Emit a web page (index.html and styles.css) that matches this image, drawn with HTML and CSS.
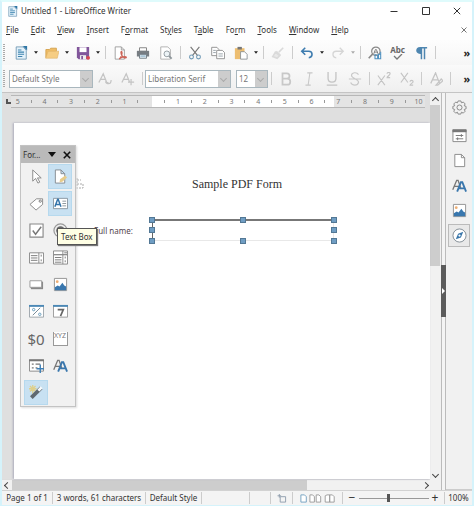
FILE: index.html
```html
<!DOCTYPE html>
<html lang="en">
<head>
<meta charset="utf-8">
<title>Untitled 1 - LibreOffice Writer</title>
<link rel="stylesheet" href="styles.css">
</head>
<body>
<svg class="defs" aria-hidden="true">
  <symbol id="doc" viewBox="0 0 16 16"><path d="M3 1.5h7l3.500 3.500v9.500H3z" fill="#fff" stroke="#8a8a8a"/><path d="M10 1.500v3.500h3.500" fill="none" stroke="#8a8a8a"/></symbol>
  <symbol id="writer" viewBox="0 0 16 16"><path d="M2.500 1h8l3.500 4v10H2.500z" fill="#e3f1fa" stroke="#7199b4"/><path d="M10 0h5v5z" fill="#2f76a5"/><path d="M4.500 4.500h4M4.500 7h7M4.500 9.500h7M4.500 12h5" stroke="#3d83ae" stroke-width="1.200"/></symbol>
  <symbol id="aa" viewBox="0 0 16 16"><path d="M.8 12.500L5 2.500h1.500l3 9M2.500 9h5" fill="none" stroke="#777" stroke-width="1.400"/><path d="M5.500 14.500l4-10h1.500l4 10M7 11h6.500" fill="none" stroke="#3a77ad" stroke-width="2"/></symbol>
  <symbol id="image" viewBox="0 0 16 16"><path d="M1.500 1.500h13v13h-13z" fill="#fff" stroke="#929292"/><circle cx="4.500" cy="5" r="1.500" fill="#eeae73"/><path d="M2 14v-3l3-2 2 1 3-4 2 3 2 1v4z" fill="#3977ae"/></symbol>
  <symbol id="down" viewBox="0 0 8 5"><path d="M0 0h8L4 5z" fill="currentColor"/></symbol>
</svg>
<div class="window">
  <header class="titlebar">
    <svg class="app-icon"><use href="#writer"/></svg>
    <h1>Untitled 1 - LibreOffice Writer</h1>
    <button class="win-btn" aria-label="Minimize"><svg viewBox="0 0 8 8"><path d="M.5 4.500h7" stroke="#333"/></svg></button>
    <button class="win-btn" aria-label="Maximize"><svg viewBox="0 0 8 8"><path d="M.5 .5h7v7h-7z" fill="none" stroke="#333"/></svg></button>
    <button class="win-btn" aria-label="Close"><svg viewBox="0 0 8 8"><path d="M.8 .8l6.400 6.400M7.200 .8L.8 7.200" stroke="#333"/></svg></button>
  </header>
  <nav class="menubar">
    <a href="#"><u>F</u>ile</a><a href="#"><u>E</u>dit</a><a href="#"><u>V</u>iew</a><a href="#"><u>I</u>nsert</a><a href="#">F<u>o</u>rmat</a><a href="#">St<u>y</u>les</a><a href="#">T<u>a</u>ble</a><a href="#">Fo<u>r</u>m</a><a href="#"><u>T</u>ools</a><a href="#"><u>W</u>indow</a><a href="#"><u>H</u>elp</a>
    <button class="doc-close" aria-label="Close document"><svg viewBox="0 0 8 8"><path d="M1.500 1.500l5 5M6.500 1.500l-5 5" stroke="#777"/></svg></button>
  </nav>
  <div class="toolbar standard">
    <i class="grip"></i>
    <button aria-label="New"><svg><use href="#writer"/></svg></button>
    <button class="drop" aria-label="New options"><svg><use href="#down"/></svg></button>
    <button aria-label="Open"><svg viewBox="0 0 16 16"><path d="M1 13.500V4h4l1.500-1.500H13V6" fill="#efbd67" stroke="#d3a04a"/><path d="M3.500 6H16l-2 8H.8z" fill="#f6cd83" stroke="#dcae61" stroke-width=".6"/></svg></button>
    <button class="drop" aria-label="Open options"><svg><use href="#down"/></svg></button>
    <button aria-label="Save"><svg viewBox="0 0 16 16"><path d="M1 1h14v14H3l-2-2z" fill="#81569b"/><path d="M4 1.500h8V7H4z" fill="#fff"/><path d="M4.500 10.500h7V15h-7z" fill="#eee"/><path d="M6 11.500h2V15H6z" fill="#81569b"/><circle cx="13.800" cy="13.500" r="2.200" fill="#dc4850"/></svg></button>
    <button class="drop" aria-label="Save options"><svg><use href="#down"/></svg></button>
    <i class="sep"></i>
    <button aria-label="Export as PDF"><svg viewBox="0 0 16 16"><path d="M2.500 1h7l3.500 3.500V15H2.500zM9.500 1v3.500H13" fill="#fff" stroke="#999"/><path d="M7 15c3-3 4-7 3-8.500S8 9 11 12s5 1.500 4 .5-5 0-8 2.500z" fill="none" stroke="#cb6357" stroke-width="1.300"/></svg></button>
    <button aria-label="Print"><svg viewBox="0 0 16 16"><path d="M4 2h8v4H4z" fill="#fff" stroke="#777"/><path d="M1 5.500h14V12H1z" fill="#777d82"/><path d="M4 9.500h8V14H4z" fill="#e9f1f6" stroke="#6c7880"/><path d="M5 11.500h6" stroke="#6c9cba"/></svg></button>
    <button aria-label="Print preview"><svg viewBox="0 0 16 16"><path d="M2 1h8l3 3v11H2z" fill="#fff" stroke="#aaa"/><circle cx="9" cy="9" r="3.300" fill="#edf4f7" stroke="#8d969b"/><path d="M11.500 11.500l3 3" stroke="#8d969b" stroke-width="2"/></svg></button>
    <i class="sep"></i>
    <button aria-label="Cut"><svg viewBox="0 0 16 16"><path d="M3 1l8 10M13 1L5 11" stroke="#777" stroke-width="1.300"/><circle cx="4" cy="12.500" r="2.200" fill="none" stroke="#709ab6" stroke-width="1.200"/><circle cx="12" cy="12.500" r="2.200" fill="none" stroke="#709ab6" stroke-width="1.200"/></svg></button>
    <button aria-label="Copy"><svg viewBox="0 0 16 16"><path d="M.8 1.500h6L9 4v7H.8z" fill="#fff" stroke="#8a8a8a"/><path d="M6.500 5H13l2.500 2.500v7h-9z" fill="#fff" stroke="#8a8a8a"/><path d="M2.500 5h3M2.500 7.500h3M8.500 9h5M8.500 11.500h5" stroke="#8f9aa2"/></svg></button>
    <button aria-label="Paste"><svg viewBox="0 0 16 16"><path d="M1 2.500h11V15H1z" fill="#edbe71"/><path d="M4 1h5v3H4z" fill="#777"/><path d="M7.500 6.500H12l3 3V15H7.500z" fill="#fff" stroke="#899096"/></svg></button>
    <button class="drop" aria-label="Paste options"><svg><use href="#down"/></svg></button>
    <i class="sep"></i>
    <button disabled aria-label="Clone formatting"><svg viewBox="0 0 16 16"><path d="M14 2L9 7M6 6l5 5M5 7l-3 5 5 2 3-3z" stroke="#dadada" stroke-width="1.800" fill="#e8e8e8"/></svg></button>
    <i class="sep"></i>
    <button aria-label="Undo"><svg viewBox="0 0 16 16"><path d="M6 2L2 6l4 4M2 6h8c5 0 5 7 0 7.500" fill="none" stroke="#3e7caf" stroke-width="1.800"/></svg></button>
    <button class="drop" aria-label="Undo options"><svg><use href="#down"/></svg></button>
    <button disabled aria-label="Redo"><svg viewBox="0 0 16 16"><path d="M10 2l4 4-4 4M14 6H6c-5 0-5 7 0 7.500" fill="none" stroke="#d5d5d5" stroke-width="1.500"/></svg></button>
    <button class="drop faded" aria-label="Redo options"><svg><use href="#down"/></svg></button>
    <i class="sep"></i>
    <button aria-label="Find and replace"><svg viewBox="0 0 16 16"><circle cx="9" cy="6" r="4.800" fill="none" stroke="#888" stroke-width="1.400"/><path d="M5.500 9L.8 14" stroke="#888" stroke-width="1.800"/><path d="M6.500 9l2-5h1l2 5M7 7h4" fill="none" stroke="#777"/><path d="M10 10h-2v4.500h3V10M14.500 6.500v8h-2.500v-5h2.500" fill="none" stroke="#4c90c0" stroke-width="1.200"/></svg></button>
    <button class="spell" aria-label="Spelling"><b>Abc</b><svg viewBox="0 0 10 6"><path d="M1 2l3 3 5-5" fill="none" stroke="#777" stroke-width="1.300"/></svg></button>
    <button aria-label="Formatting marks"><svg viewBox="0 0 16 16"><path d="M7 2h8M8.500 2v13M12 2v13" stroke="#4e86b0" stroke-width="1.700"/><path d="M8.500 1.200H7C1 1.200 1 9 7 9h1.500z" fill="#4e86b0"/></svg></button>
    <i class="sep"></i>
    <button class="more" aria-label="More tools">»</button>
  </div>
  <div class="toolbar formatting">
    <i class="grip"></i>
    <span class="combo style"><select disabled aria-label="Paragraph style"><option>Default Style</option></select></span>
    <button disabled aria-label="Update style"><svg viewBox="0 0 16 16"><path d="M1 12L6 2l4 10M3 8.500h6M15 9c0 6-6 5-6 2M9 9v3h3" fill="none" stroke="#c4c4c4" stroke-width="1.400"/></svg></button>
    <button disabled aria-label="New style"><svg viewBox="0 0 16 16"><path d="M1 12L6 2l4 10M3 8.500h6M11.500 8v7M8 11.500h7" fill="none" stroke="#c4c4c4" stroke-width="1.400"/></svg></button>
    <i class="sep"></i>
    <span class="combo font"><select disabled aria-label="Font name"><option>Liberation Serif</option></select></span>
    <span class="combo size"><select disabled aria-label="Font size"><option>12</option></select></span>
    <i class="sep"></i>
    <button disabled aria-label="Bold"><svg viewBox="0 0 16 16"><path d="M4 1.500h5c4 0 4 6 0 6H4zM4 7.500h5.500c4.500 0 4.500 7 0 7H4z" fill="none" stroke="#c8c8c8" stroke-width="2"/></svg></button>
    <button disabled aria-label="Italic"><svg viewBox="0 0 16 16"><path d="M6 1h6M4 15h6M9 1L7 15" stroke="#c8c8c8" stroke-width="1.200"/></svg></button>
    <button disabled aria-label="Underline"><svg viewBox="0 0 16 16"><path d="M3.500 0v7c0 6 9 6 9 0V0M2 15h12" fill="none" stroke="#c4c4c4" stroke-width="1.500"/></svg></button>
    <button disabled aria-label="Strikethrough"><svg viewBox="0 0 16 16"><path d="M12 3C10-.5 4 .5 4 4s9 4 8 8-7 4-9 0M1 8h14" fill="none" stroke="#c8c8c8" stroke-width="1.300"/></svg></button>
    <i class="sep"></i>
    <button disabled aria-label="Superscript"><svg viewBox="0 0 16 16"><path d="M1 4l8 11M9 4L1 15M11.500 2c0-2 3.500-2 3.500 0 0 1.500-3.500 3-3.500 4.500H15" fill="none" stroke="#c4c4c4" stroke-width="1.300"/></svg></button>
    <button disabled aria-label="Subscript"><svg viewBox="0 0 16 16"><path d="M1 1l8 11M9 1L1 12M11.500 11c0-2 3.500-2 3.500 0 0 1.500-3.500 2.500-3.500 4H15" fill="none" stroke="#c4c4c4" stroke-width="1.300"/></svg></button>
    <i class="sep"></i>
    <button disabled aria-label="Clear formatting"><svg viewBox="0 0 16 16"><path d="M2 13L7.500 1 12 13M4 9h7M8 15l6-7 2 2-6 5z" fill="none" stroke="#c4c4c4" stroke-width="1.400"/></svg></button>
    <i class="sep"></i>
    <button class="more" aria-label="More formatting">»</button>
  </div>
  <div class="workspace">
    <main class="editor">
      <div class="ruler-row">
        <i class="tab-mark"></i>
        <div class="ruler"><span>5</span><i></i><span>4</span><i></i><span>3</span><i></i><span>2</span><i></i><span>1</span><i></i><span></span><i></i><span>1</span><i></i><span>2</span><i></i><span>3</span><i></i><span>4</span><i></i><span>5</span><i></i><span>6</span><i></i><span>7</span><i></i><span>8</span><i></i><span>9</span><i></i><span>10</span></div>
      </div>
      <div class="canvas">
        <article class="page">
          <h2>Sample PDF Form</h2>
          <div class="form-line">
            <label for="fullname">Full name:</label>
            <div class="field">
              <input id="fullname" type="text">
              <i class="h tl"></i><i class="h tc"></i><i class="h tr"></i><i class="h ml"></i><i class="h mr"></i><i class="h bl"></i><i class="h bc"></i><i class="h br"></i>
            </div>
          </div>
        </article>
        <svg class="anchor" viewBox="0 0 10 14"><path d="M2 1v11M2 3h4M2 7h6v4H4" fill="none" stroke="#aaa" stroke-dasharray="2 1"/></svg>
        <section class="palette" aria-label="Form controls">
          <header><span>For...</span><svg class="tri"><use href="#down"/></svg><button aria-label="Close form controls"><svg viewBox="0 0 8 8"><path d="M.8 .8l6.400 6.400M7.200 .8L.8 7.200" stroke="#111" stroke-width="1.600"/></svg></button></header>
          <div class="tools">
            <button aria-label="Select"><svg viewBox="0 0 16 16"><path d="M4 1v12l3-3 2.500 5 2-1L9 9.500h4z" fill="#fff" stroke="#888"/></svg></button>
            <button class="on" aria-label="Design mode"><svg viewBox="0 0 16 16"><path d="M2.500 1h6l4 4v10h-10zM8.500 1v4h4" fill="#fff" stroke="#858b90"/><path d="M7 14l.5-3L13 7l2 2-5 4.500z" fill="#e7cc8b"/></svg></button>
            <button aria-label="Label"><svg viewBox="0 0 16 16"><path d="M1 9l7-6h6.500v6l-7 6z" fill="#fff" stroke="#888"/><circle cx="12" cy="5.500" r="1.200" fill="#fff" stroke="#777"/></svg></button>
            <button class="on" aria-label="Text Box"><svg viewBox="0 0 16 16"><path d="M.5 2.500h15v11H.5z" fill="#fff" stroke="#8795a0"/><path d="M2 11.500l3-8h.5l3 8M3 9h4.500" fill="none" stroke="#3475ab" stroke-width="1.600"/><path d="M10 5.500h4M10 8h4M10 10.500h4" stroke="#8b949a"/></svg></button>
            <button aria-label="Check Box"><svg viewBox="0 0 16 16"><path d="M1 1h14v14H1z" fill="#fff" stroke="#888" stroke-width="1.200"/><path d="M4 8l3 4 6-8" fill="none" stroke="#777" stroke-width="1.500"/></svg></button>
            <button aria-label="Option Button"><svg viewBox="0 0 16 16"><circle cx="8" cy="8" r="7" fill="#eee" stroke="#999" stroke-width="1.300"/><circle cx="8" cy="8" r="4.600" fill="#686868"/></svg></button>
            <button aria-label="List Box"><svg viewBox="0 0 16 16"><path d="M.5 3h15v11H.5zM10.500 3v11" fill="#fff" stroke="#888"/><path d="M2 6h7M2 8.500h7M2 11h7M13 5v2M13 10v2" stroke="#777"/></svg></button>
            <button aria-label="Combo Box"><svg viewBox="0 0 16 16"><path d="M.5 1h15v4H.5zM.5 5h15v10H.5zM10.500 1v14" fill="#fff" stroke="#888"/><path d="M2 8h7M2 10.500h7M2 13h7M12 3h3M13 7v2M13 11v2" stroke="#777"/></svg></button>
            <button aria-label="Push Button"><svg viewBox="0 0 16 16"><path d="M2 5h13v8H2z" fill="#888"/><path d="M1 4h12.500v7H1z" fill="#fff" stroke="#999"/></svg></button>
            <button aria-label="Image Button"><svg><use href="#image"/></svg></button>
            <button aria-label="Formatted Field"><svg viewBox="0 0 16 16"><path d="M.5 2h15v12H.5z" fill="#fff" stroke="#9ba3aa"/><path d="M0 2h16" stroke="#4b88b6" stroke-width="2"/><path d="M4 12l8-8" stroke="#6f8491"/><circle cx="5" cy="6" r="1.300" fill="none" stroke="#659bbb"/><circle cx="11.500" cy="11" r="1.300" fill="none" stroke="#659bbb"/></svg></button>
            <button aria-label="Date Field"><svg viewBox="0 0 16 16"><path d="M.5 2h15v12H.5z" fill="#fff" stroke="#999"/><path d="M0 2h16" stroke="#4b88b6" stroke-width="2"/><path d="M5 6h6l-3 7" fill="none" stroke="#666" stroke-width="1.800"/></svg></button>
            <button class="money" aria-label="Currency Field">$0</button>
            <button class="group" aria-label="Group Box"><span>XYZ</span></button>
            <button aria-label="Table Control"><svg viewBox="0 0 16 16"><path d="M.5 2h15v12H.5z" fill="#fff" stroke="#888"/><path d="M0 2.500h16" stroke="#777" stroke-width="2"/><path d="M3 6.500h2M3 10.500h2M7 6.500h5M7 10.500h2" stroke="#777" stroke-width="1.400"/><path d="M12 7v9M8 11.500h8" stroke="#3e7fb5" stroke-width="1.500"/></svg></button>
            <button aria-label="More Fields"><svg><use href="#aa"/></svg></button>
            <button class="on" aria-label="Wizard"><svg viewBox="0 0 16 16"><path d="M4 0v9M0 4h8M1 1l6 6M7 1L1 7" stroke="#dfd08c" stroke-width="1.400"/><path d="M2.500 13.500L13 3" stroke="#606970" stroke-width="4"/><path d="M10 6l3.500-3.500" stroke="#f7fafc" stroke-width="3"/></svg></button>
          </div>
        </section>
        <div class="tooltip" role="tooltip">Text Box</div>
      </div>
      <div class="hscroll"><b class="chev left"></b><i class="thumb"></i><b class="chev right"></b></div>
    </main>
    <div class="vscroll"><b class="chev up"></b><i class="thumb"></i><b class="chev bottom"></b></div>
    <div class="splitter"><i class="track"></i><i class="handle"></i></div>
    <aside class="sidebar">
      <button aria-label="Sidebar settings"><svg viewBox="0 0 16 16"><path d="M6.500 1h3l.6 2 2-.8 1.900 2-1 1.900 2 .7v2.600l-2 .7 1 1.900-2 2-1.900-1-.7 2H6.500l-.7-2-1.900 1-2-2 1-1.900-2-.7V6.800l2-.7-1-1.900 2-2 1.900.8z" fill="none" stroke="#858585"/><circle cx="8" cy="8" r="2.700" fill="none" stroke="#858585"/></svg></button>
      <button aria-label="Properties"><svg viewBox="0 0 16 16"><path d="M1 2h14v12.500H1z" fill="#fff" stroke="#888"/><path d="M.5 3h15" stroke="#777" stroke-width="3"/><path d="M4 8h8M4 11.500h8M10 6.500v3M6 10v3" stroke="#777"/></svg></button>
      <button aria-label="Page"><svg><use href="#doc"/></svg></button>
      <button aria-label="Styles"><svg><use href="#aa"/></svg></button>
      <button aria-label="Gallery"><svg><use href="#image"/></svg></button>
      <button class="boxed" aria-label="Navigator"><svg viewBox="0 0 16 16"><circle cx="8" cy="8" r="7" fill="#fff" stroke="#808b93"/><path d="M12 4l-2.500 6L4 12l2.500-6z" fill="#3976aa"/><circle cx="8" cy="8" r="1.200" fill="#fff"/></svg></button>
    </aside>
  </div>
  <footer class="status">
    <span class="pages">Page 1 of 1</span><span class="words">3 words, 61 characters</span><span class="pstyle">Default Style</span><span class="blank"></span><span class="lang"></span>
    <span class="select-mode"><svg viewBox="0 0 10 10"><path d="M3 3h6v6H3zM0 2h4M2 0v4" fill="none" stroke="#8b9aaa"/></svg></span>
    <span class="views"><svg viewBox="0 0 40 10"><path d="M1 1h4l2 2v6H1z" fill="#fff" stroke="#6f9ec0"/><path d="M11 1h3l2 2v6h-5zM18 1h3l2 2v6h-5zM28 2l2-1h3v8h-5zM33 1h3l2 2v6h-5z" fill="#fff" stroke="#999"/></svg></span>
    <span class="zoom"><button aria-label="Zoom out">−</button><input type="range" min="0" max="100" value="43" aria-label="Zoom"><button aria-label="Zoom in">+</button></span>
    <span class="percent">100%</span>
  </footer>
</div>
</body>
</html>
```
FILE: styles.css
```css
* { box-sizing: border-box; }
body { margin: 0; font: 8px/12px "Noto Sans", "Open Sans", sans-serif; color: #333; }
button { font: inherit; color: inherit; border: 0; background: none; padding: 0; margin: 0; display: flex; align-items: center; justify-content: center; flex: none; }
h1, h2 { margin: 0; font-weight: 400; }
svg { display: block; flex: none; }
.defs { position: absolute; width: 0; height: 0; }
.window { min-height: 100vh; display: flex; flex-direction: column; border: 2px solid #d5f3fb; border-top-color: #dffbfc; border-bottom-width: 1px; background: #fafafa; }

.titlebar { display: flex; align-items: center; height: 18px; background: #fff; padding-left: 5px; }
.titlebar h1 { font-size: 8px; flex: 1; }
.app-icon { width: 11px; height: 11px; margin-right: 3px; }
.win-btn { width: 32px; }
.win-btn svg { width: 8px; height: 8px; }
.titlebar .win-btn:last-child { width: 30px; }

.menubar { display: flex; align-items: center; height: 20px; padding-left: 4px; gap: 12px; background: #fefefe; }
.menubar a { color: #333; text-decoration: none; }
.doc-close { margin-left: auto; width: 16px; }
.doc-close svg { width: 8px; height: 8px; }

.toolbar { display: flex; align-items: center; padding-left: 1px; background: linear-gradient(#fdfdfd, #f6f6f6); }
.standard { height: 25px; }
.formatting { height: 28px; border-bottom: 1px solid #c4c4c4; background: linear-gradient(#fafafa, #efefef); }
.toolbar button { width: 23px; height: 22px; }
.toolbar button svg { width: 14px; height: 14px; }
.toolbar .drop { width: 8px; }
.toolbar .drop svg { width: 4px; height: 3px; color: #222; }
.toolbar .faded svg { color: #aaa; }
.sep { width: 6px; height: 13px; flex: none; background: linear-gradient(#ccc, #ccc) center / 1px 100% no-repeat; }
.grip { width: 2px; height: 17px; margin-right: 4px; flex: none; background: repeating-linear-gradient(#aaa 0 1px, transparent 1px 2px); }
.toolbar .spell { flex-direction: column; color: #666; font-size: 8px; line-height: 8px; }
.toolbar .spell svg { width: 10px; height: 6px; }
.toolbar .more { margin-left: auto; width: 10px; font-size: 11px; font-weight: 700; color: #222; }
.combo { position: relative; height: 18px; border: 1px solid #a9b7be; background: #fff; flex: none; }
.combo::after { content: ""; position: absolute; right: 0; top: 0; bottom: 0; width: 12px; pointer-events: none; background: #cdcdcd; clip-path: none; }
.combo::before { content: ""; position: absolute; z-index: 1; right: 4px; top: 5px; width: 4px; height: 4px; border: solid #aaa; border-width: 0 1px 1px 0; transform: rotate(45deg); }
.combo select { appearance: none; border: 0; background: none; width: 100%; height: 16px; padding: 0 12px 0 2px; font: inherit; color: #777; opacity: 1; }
.style { width: 84px; }
.font { width: 86px; margin-right: 5px; }
.size { width: 32px; }

.workspace { flex: 1; display: flex; background: #f1f1f1; }
.editor { flex: 1; min-width: 0; display: flex; flex-direction: column; background: #dfdfdf; }
.ruler-row { display: flex; height: 16px; padding-top: 2px; flex: none; align-items: flex-start; }
.tab-mark { width: 5px; height: 5px; border: solid #555; border-width: 0 0 2px 2px; margin: 4px 0 0 4px; }
.ruler { flex: 1; display: flex; align-items: center; height: 13px; margin-right: 5px; border: solid #b7b7b7; border-width: 1px 0; background: linear-gradient(90deg, #e4e4e4 34%, #fff 34% 78%, #e4e4e4 78%); color: #777; font-size: 7px; line-height: 10px; }
.ruler > * { flex: 1 1 0; display: flex; justify-content: center; min-width: 0; }
.ruler i::before { content: ""; width: 1px; height: 3px; background: #999; }

.canvas { flex: 1; position: relative; display: flex; padding: 14px 0 0 12px; }
.page { flex: 1; background: #fff; padding: 54px 50px 0 80px; box-shadow: -1px 0 2px #aab; }
.page h2 { font: 12px/14px "Liberation Serif", serif; text-align: center; color: #333; }
.form-line { display: flex; align-items: center; margin-top: 28px; }
.form-line label { width: 58px; color: #53434d; padding-top: 2px; }
.field { position: relative; flex: 0 1 182px; height: 22px; }
.field input { display: block; width: 100%; height: 22px; border: 1px solid #e8e8e8; border-top: 2px solid #777; border-left-color: #666; padding: 0; background: #fff; }
.h { position: absolute; width: 6px; height: 6px; margin: -3px; background: #6f9dc3; border: 1px solid #537895; }
.tl, .tc, .tr { top: 1px; }
.ml, .mr { top: 50%; }
.bl, .bc, .br { top: 100%; }
.tl, .ml, .bl { left: 0; }
.tc, .bc { left: 50%; }
.tr, .mr, .br { left: 100%; }
.anchor { position: absolute; left: 73px; top: 68px; width: 10px; height: 14px; }

.palette { position: absolute; left: 18px; top: 36px; width: 56px; background: #f1f1f1; border: 1px solid #c3c3c3; box-shadow: 1px 1px 2px #ddd; }
.palette header { display: flex; align-items: center; height: 17px; padding: 0 4px 0 2px; background: #bababa; }
.palette header span { flex: 1; }
.tri { width: 8px; height: 5px; color: #111; margin-right: 7px; }
.palette header button svg { width: 8px; height: 8px; }
.tools { display: grid; grid-template-columns: 24px 24px; gap: 2px 0; padding: 1px 3px; }
.tools button { height: 25px; width: 24px; }
.tools svg { width: 15px; height: 15px; }
.tools .on { background: #c8e1f2; border: 1px solid #b6d9ee; }
.tools .money { font: 15px/18px "Noto Sans", sans-serif; color: #666; }
.tools .group { align-items: center; }
.group span { width: 15px; height: 14px; border: 1px solid #999; border-top: 0; background: #fff; font-size: 7px; line-height: 7px; color: #777; display: flex; justify-content: center; }
.tooltip { position: absolute; left: 55px; top: 119px; padding: 1px 3px; border: 1px solid #555; background: #ffffe5; box-shadow: 1px 1px 1px #777; line-height: 13px; color: #333; white-space: nowrap; }

.hscroll { display: flex; height: 11px; flex: none; background: #f1f1f1; border-top: 1px solid #ddd; }
.hscroll .thumb { width: 69%; margin-right: auto; background: #cdcdcd; }
.chev { width: 10px; height: 10px; flex: none; display: flex; align-items: center; justify-content: center; }
.chev::before { content: ""; width: 4px; height: 4px; border: solid #444; border-width: 1px 0 0 1px; }
.up::before { transform: rotate(45deg); }
.bottom::before { transform: rotate(225deg); }
.left::before { transform: rotate(-45deg); }
.right::before { transform: rotate(135deg); }
.vscroll { width: 10px; display: flex; flex-direction: column; padding: 2px 0 11px; background: #f1f1f1; }
.vscroll .thumb { height: 42%; margin-bottom: auto; background: #cdcdcd; }
.splitter { width: 5px; margin-left: 1px; display: flex; flex-direction: column; border: solid #bbb; border-width: 0 1px; background: #f4f4f4; }
.track { flex: 0 1 172px; }
.handle { height: 52px; margin: 0 -1px; background: #5b5b5b; display: flex; align-items: center; justify-content: center; }
.handle::before { content: ""; border: solid transparent; border-width: 3px 0 3px 3px; border-left-color: #fff; }
.sidebar { width: 26px; display: flex; flex-direction: column; align-items: center; gap: 2px; padding-top: 3px; border-bottom: 1px solid #ccc; }
.sidebar button { width: 22px; height: 23px; }
.sidebar button:first-child { margin-bottom: 3px; }
.sidebar svg { width: 15px; height: 15px; }
.boxed { border: 1px solid #bbb; background: #e9e9e9; }

.status { display: flex; align-items: center; height: 15px; border-top: 1px solid #d2d2d2; background: #f4f4f4; flex: none; }
.status > span { height: 12px; border-right: 1px solid #ccc; display: flex; align-items: center; justify-content: center; white-space: nowrap; }
.pages { width: 51px; }
.words { width: 93px; }
.pstyle { width: 56px; }
.status .blank { flex: 1; }
.lang { width: 21px; }
.select-mode { width: 22px; }
.select-mode svg { width: 10px; height: 9px; }
.views { width: 50px; }
.views svg { width: 40px; height: 9px; }
.zoom { width: 102px; gap: 2px; }
.zoom button { font-size: 12px; width: 9px; height: 12px; }
.zoom input { appearance: none; width: 70px; height: 11px; margin: 0; background: linear-gradient(#999, #999) center / 100% 1px no-repeat; }
.zoom input::-webkit-slider-thumb { appearance: none; width: 3px; height: 8px; background: #555; }
.status .percent { width: 27px; border: 0; }
```
